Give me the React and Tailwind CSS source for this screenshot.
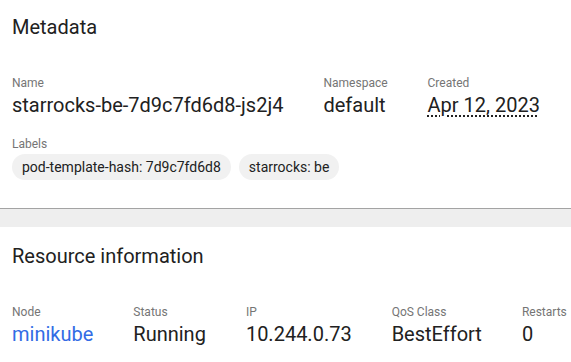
const font = { fontFamily: 'Roboto, "Noto Sans", sans-serif' }

function Prop({ label, children }) {
  return (
    <div className="flex flex-col">
      <span className="text-[12px] leading-[16px] text-[#757575]">{label}</span>
      <span className="text-[20px] leading-[28px] text-[#212121] whitespace-nowrap">{children}</span>
    </div>
  )
}

function Chip({ children }) {
  return (
    <span className="h-[26px] px-[10px] flex items-center rounded-full bg-[#f1f1f1] text-[14px] text-[#212121] whitespace-nowrap">
      {children}
    </span>
  )
}

export default function App() {
  return (
    <div className="w-[571px] h-[362px] overflow-hidden bg-[#eeeeee]" style={font}>
      {/* Metadata card */}
      <div className="bg-white h-[209px] border-b border-[#a3a3a3] px-3 pt-[11px]">
        <h2 className="text-[20px] leading-[32px] text-[#212121]">Metadata</h2>
        <div className="flex gap-10 mt-8">
          <Prop label="Name">starrocks-be-7d9c7fd6d8-js2j4</Prop>
          <Prop label="Namespace">default</Prop>
          <Prop label="Created">
            <span className="underline decoration-dotted decoration-[#212121] underline-offset-[3px]">Apr 12, 2023</span>
          </Prop>
        </div>
        <div className="mt-[17px]">
          <span className="block text-[12px] leading-[16px] text-[#757575]">Labels</span>
          <div className="flex gap-2 mt-[2px]">
            <Chip>pod-template-hash: 7d9c7fd6d8</Chip>
            <Chip>starrocks: be</Chip>
          </div>
        </div>
      </div>

      {/* Resource information card */}
      <div className="bg-white mt-[18px] h-[200px] px-3 pt-[13px]">
        <h2 className="text-[20px] leading-[32px] text-[#212121]">Resource information</h2>
        <div className="flex gap-10 mt-8">
          <Prop label="Node"><span className="text-[#326ce5]">minikube</span></Prop>
          <Prop label="Status">Running</Prop>
          <Prop label="IP">10.244.0.73</Prop>
          <Prop label="QoS Class">BestEffort</Prop>
          <Prop label="Restarts">0</Prop>
        </div>
      </div>
    </div>
  )
}
